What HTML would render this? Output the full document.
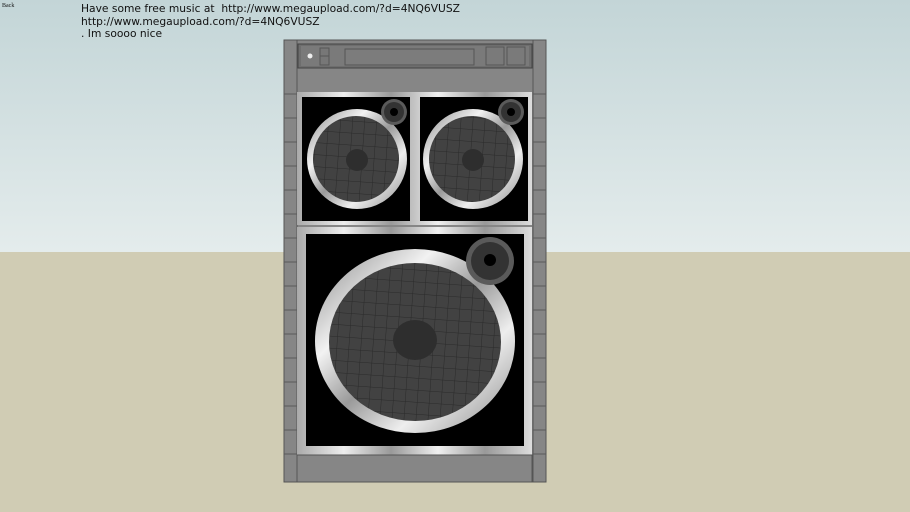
<!DOCTYPE html>
<html><head><style>
html,body{margin:0;padding:0;width:910px;height:512px;overflow:hidden}
.t{position:absolute;font-family:"DejaVu Sans","Liberation Sans",sans-serif;font-size:10.7px;color:#111;line-height:12.5px}
</style></head><body>
<svg width="910" height="512" style="position:absolute;left:0;top:0">
<defs>
<linearGradient id="sky" x1="0" y1="0" x2="0" y2="1"><stop offset="0" stop-color="#c3d5d7"/><stop offset="1" stop-color="#e4ecec"/></linearGradient>
<linearGradient id="silv" x1="0" y1="0" x2="1" y2="1"><stop offset="0" stop-color="#888"/><stop offset=".3" stop-color="#f2f2f2"/><stop offset=".5" stop-color="#9a9a9a"/><stop offset=".7" stop-color="#eee"/><stop offset="1" stop-color="#888"/></linearGradient>
<linearGradient id="bar" x1="0" y1="0" x2="1" y2="0"><stop offset="0" stop-color="#aaa"/><stop offset=".2" stop-color="#eee"/><stop offset=".4" stop-color="#999"/><stop offset=".6" stop-color="#f0f0f0"/><stop offset=".8" stop-color="#999"/><stop offset="1" stop-color="#ddd"/></linearGradient>
<pattern id="grid" width="12" height="12" patternUnits="userSpaceOnUse" patternTransform="rotate(4)"><rect width="12" height="12" fill="#424242"/><path d="M0 0H12M0 0V12" stroke="#2a2a2a" stroke-width="1"/></pattern>
</defs>
<rect width="910" height="252" fill="url(#sky)"/>
<rect y="252" width="910" height="260" fill="#d0ccb4"/>
<rect x="284" y="40" width="262" height="442" fill="#868686" stroke="#555"/>
<g stroke="#555" stroke-width="1">
<line x1="297" y1="40" x2="297" y2="482"/><line x1="533" y1="40" x2="533" y2="482"/>
</g>
<g stroke="#5a5a5a">
<path d="M284 94H297M284 118H297M284 142H297M284 166H297M284 190H297M284 214H297M284 238H297M284 262H297M284 286H297M284 310H297M284 334H297M284 358H297M284 382H297M284 406H297M284 430H297M284 454H297"/>
<path d="M533 94H546M533 118H546M533 142H546M533 166H546M533 190H546M533 214H546M533 238H546M533 262H546M533 286H546M533 310H546M533 334H546M533 358H546M533 382H546M533 406H546M533 430H546M533 454H546"/>
</g>
<rect x="298" y="44" width="234" height="24" fill="#6e6e6e" stroke="#444"/>
<rect x="301" y="46" width="228" height="20" fill="#7a7a7a"/>
<circle cx="310" cy="56" r="2.5" fill="#eee"/>
<rect x="320" y="48" width="9" height="17" fill="#777" stroke="#555"/><line x1="320" y1="56" x2="329" y2="56" stroke="#555"/>
<rect x="345" y="49" width="129" height="16" fill="#7c7c7c" stroke="#555"/>
<rect x="486" y="47" width="18" height="18" fill="#7a7a7a" stroke="#555"/><rect x="507" y="47" width="18" height="18" fill="#7a7a7a" stroke="#555"/>
<rect x="297" y="92" width="235" height="133" fill="url(#bar)"/>
<rect x="302" y="97" width="108" height="124" fill="#000"/>
<rect x="420" y="97" width="108" height="124" fill="#000"/>
<rect x="297" y="227" width="235" height="228" fill="url(#bar)"/>
<rect x="306" y="234" width="218" height="212" fill="#000"/>
<rect x="297" y="455" width="235" height="27" fill="#868686" stroke="#555"/>
<g>
<circle cx="357" cy="159" r="50" fill="url(#silv)"/><circle cx="356" cy="159" r="43" fill="url(#grid)"/><circle cx="357" cy="160" r="11" fill="#2e2e2e"/>
<circle cx="394" cy="112" r="13" fill="#5a5a5a"/><circle cx="394" cy="112" r="10" fill="#333"/><circle cx="394" cy="112" r="4" fill="#000"/>
<circle cx="473" cy="159" r="50" fill="url(#silv)"/><circle cx="472" cy="159" r="43" fill="url(#grid)"/><circle cx="473" cy="160" r="11" fill="#2e2e2e"/>
<circle cx="511" cy="112" r="13" fill="#5a5a5a"/><circle cx="511" cy="112" r="10" fill="#333"/><circle cx="511" cy="112" r="4" fill="#000"/>
<ellipse cx="415" cy="341" rx="100" ry="92" fill="url(#silv)"/><ellipse cx="415" cy="342" rx="86" ry="79" fill="url(#grid)"/><ellipse cx="415" cy="340" rx="22" ry="20" fill="#2e2e2e"/>
<circle cx="490" cy="261" r="24" fill="#5a5a5a"/><circle cx="490" cy="261" r="19" fill="#333"/><circle cx="490" cy="260" r="6" fill="#000"/>
</g>
</svg>
<div class="t" style="left:2px;top:0;font-size:6px;font-family:'Liberation Serif',serif">Back</div>
<div class="t" style="left:81px;top:3px">Have some free music at &nbsp;http://www.megaupload.com/?d=4NQ6VUSZ<br>http://www.megaupload.com/?d=4NQ6VUSZ<br>. Im soooo nice</div>
</body></html>
